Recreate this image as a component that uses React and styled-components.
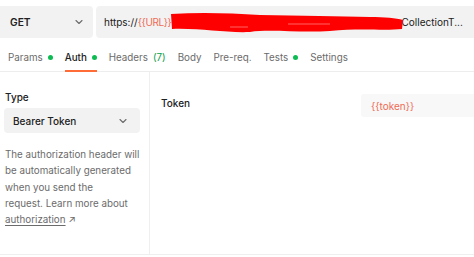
import React from 'react'
import styled, { createGlobalStyle } from 'styled-components'

const Global = createGlobalStyle`
  html, body {
    margin: 0;
    padding: 0;
    background: #ffffff;
  }
  body {
    font-family: Inter, "Noto Sans", sans-serif;
    color: #212121;
    -webkit-font-smoothing: antialiased;
  }
`

const Page = styled.div`
  width: 474px;
  height: 257px;
  overflow: hidden;
  display: flex;
  flex-direction: column;
`

const TopBar = styled.div`
  display: flex;
  gap: 3px;
  padding-top: 6px;
  height: 32px;
`

const Method = styled.div`
  width: 93px;
  background: #f2f2f2;
  border-radius: 0 4px 4px 0;
  display: flex;
  align-items: center;
  justify-content: space-between;
  padding: 0 9px 0 10px;
  box-sizing: border-box;
  font-size: 10.2px;
  font-weight: 600;
`

const Url = styled.div`
  flex: 1;
  background: #f2f2f2;
  border-radius: 4px 0 0 4px;
  display: flex;
  align-items: center;
  padding-left: 8px;
  font-size: 10px;
  white-space: nowrap;
  overflow: hidden;
`

const Var = styled.span`
  color: #ef6b55;
  letter-spacing: -0.4px;
`

const Hidden = styled.span`
  position: relative;
  display: inline-block;
  width: 230px;
  height: 12px;
`

const Scribble = styled.svg`
  position: absolute;
  left: -2px;
  top: -6px;
`

const Tabs = styled.div`
  display: flex;
  align-items: stretch;
  height: 33px;
  padding-left: 8px;
  gap: 12px;
  border-bottom: 1px solid #ededed;
`

const Tab = styled.div`
  display: flex;
  align-items: center;
  gap: 5px;
  font-size: 9.8px;
  color: ${p => (p.active ? '#212121' : '#6b6b6b')};
  font-weight: ${p => (p.active ? 500 : 400)};
  border-bottom: 2px solid ${p => (p.active ? '#ff6c37' : 'transparent')};
  margin-bottom: -1px;
  padding-top: 7px;
`

const Dot = styled.span`
  width: 5px;
  height: 5px;
  border-radius: 50%;
  background: #0cbb52;
`

const Count = styled.span`
  color: #0a9e47;
`

const Body = styled.div`
  display: flex;
  height: 182px;
  border-bottom: 1px solid #efefef;
`

const Side = styled.div`
  width: 150px;
  border-right: 1px solid #efefef;
  padding: 19px 2px 0 5px;
  box-sizing: border-box;
`

const Label = styled.div`
  font-size: 10px;
  line-height: 12px;
  font-weight: 500;
  color: #212121;
  margin-top: ${p => p.offset || 0}px;
`

const Select = styled.div`
  margin: 5px 0 0 -1px;
  height: 25px;
  width: 136px;
  background: #f2f2f2;
  border-radius: 4px;
  display: flex;
  align-items: center;
  justify-content: space-between;
  padding: 0 12px 0 9px;
  box-sizing: border-box;
  font-size: 10px;
  font-weight: 500;
`

const Help = styled.p`
  margin: 14px 0 0;
  font-size: 9.8px;
  line-height: 16.3px;
  color: #6b6b6b;
  white-space: nowrap;
`

const Link = styled.span`
  text-decoration: underline;
  text-underline-offset: 2px;
`

const Main = styled.div`
  flex: 1;
  display: flex;
  justify-content: space-between;
  align-items: flex-start;
  padding: 22px 0 0 11px;
`

const Field = styled.div`
  width: 113px;
  height: 23px;
  background: #f8f8f8;
  border-radius: 3px 0 0 3px;
  display: flex;
  align-items: center;
  padding-left: 10px;
  box-sizing: border-box;
  font-size: 10px;
  color: #ef6b55;
`

const Chevron = () => (
  <svg width="10" height="10" viewBox="0 0 10 10" fill="none">
    <path d="M2 3.5 L5 6.5 L8 3.5" stroke="#6b6b6b" strokeWidth="1.1" strokeLinecap="round" strokeLinejoin="round" />
  </svg>
)

export default function App() {
  return (
    <Page>
      <Global />
      <TopBar>
        <Method>
          GET
          <Chevron />
        </Method>
        <Url>
          https://<Var>{'{{URL}}'}</Var>
          <Hidden>
            <Scribble width="234" height="24" viewBox="0 0 234 24">
              <path
                d="M1 4 C30 2 60 3 90 5 C130 6 170 6 200 7 C215 7 226 8 233 10 L232 19 C215 21 190 18 160 21 C130 23 100 19 80 22 C55 23 30 18 2 19 Z"
                fill="#ff0000"
              />
              <path d="M60 17 L78 17 M118 14 L160 14" stroke="#ffffff" strokeWidth="0.7" opacity="0.55" />
            </Scribble>
          </Hidden>
          CollectionT...
        </Url>
      </TopBar>
      <Tabs>
        <Tab>Params <Dot /></Tab>
        <Tab active>Auth <Dot /></Tab>
        <Tab>Headers <Count>(7)</Count></Tab>
        <Tab>Body</Tab>
        <Tab>Pre-req.</Tab>
        <Tab>Tests <Dot /></Tab>
        <Tab>Settings</Tab>
      </Tabs>
      <Body>
        <Side>
          <Label>Type</Label>
          <Select>
            Bearer Token
            <Chevron />
          </Select>
          <Help>
            The authorization header will
            <br />
            be automatically generated
            <br />
            when you send the
            <br />
            request. Learn more about
            <br />
            <Link>authorization</Link> ↗
          </Help>
        </Side>
        <Main>
          <Label offset={3}>Token</Label>
          <Field>{'{{token}}'}</Field>
        </Main>
      </Body>
    </Page>
  )
}
